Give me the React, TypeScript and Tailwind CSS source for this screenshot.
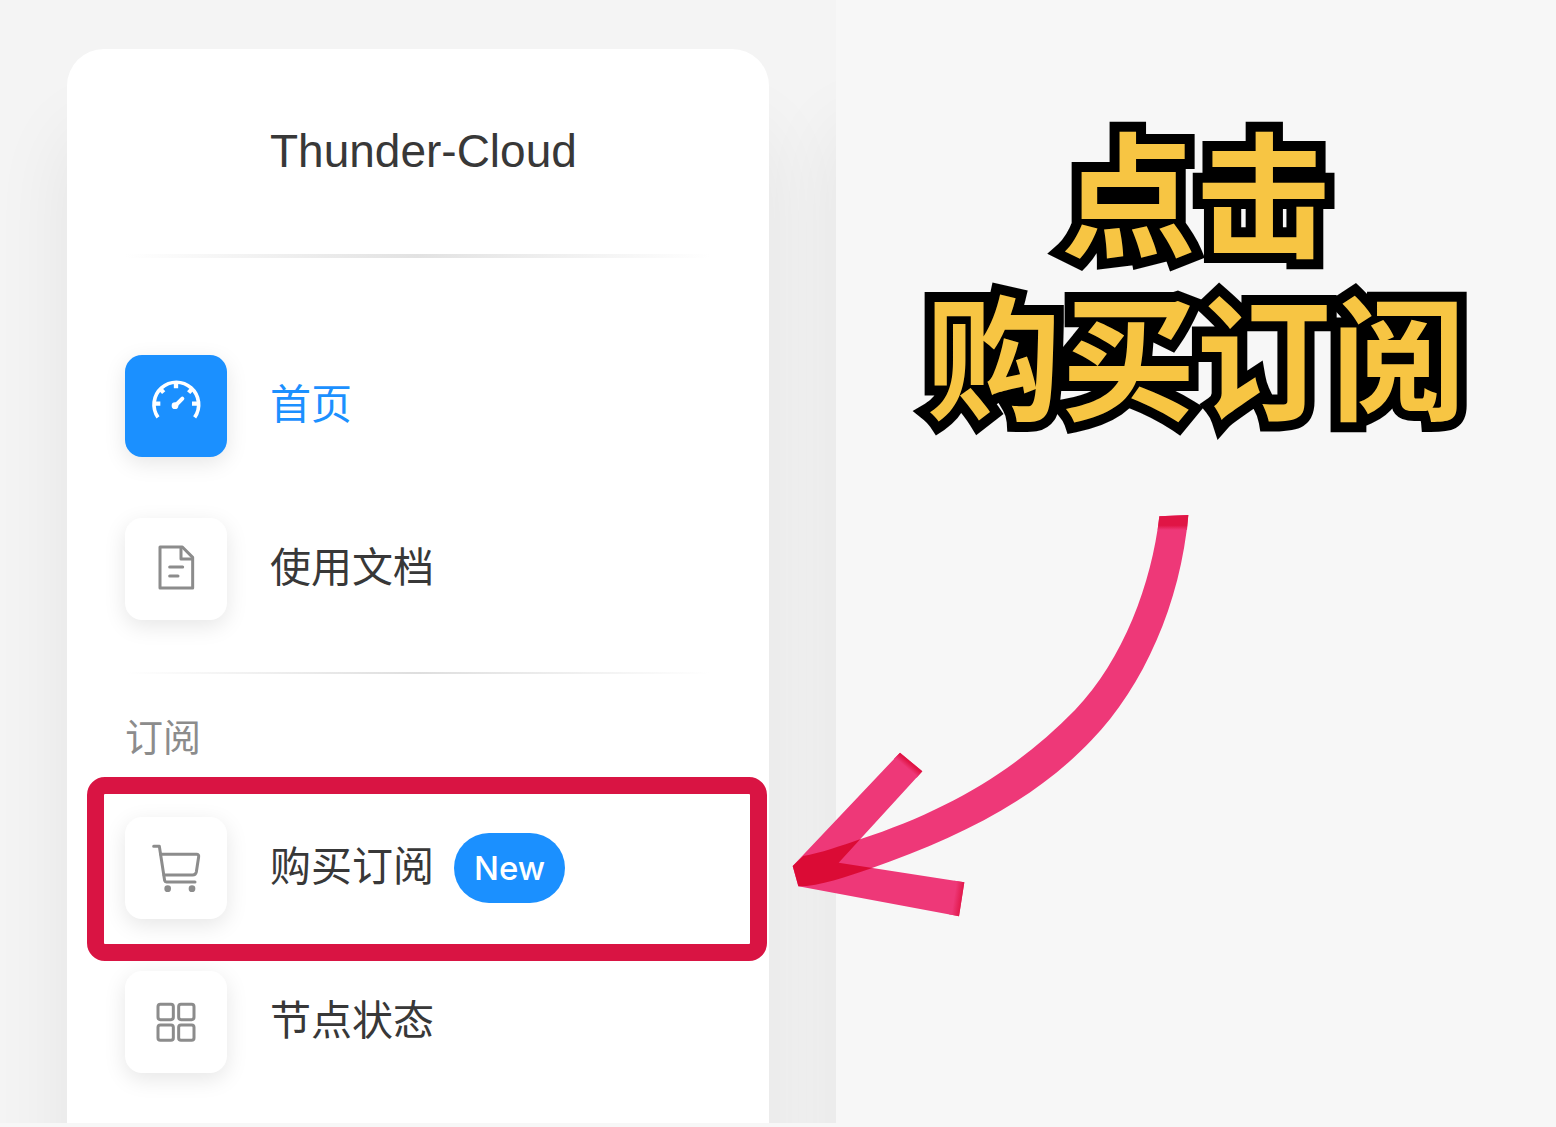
import type { ReactNode } from "react";

const ICON = "size-[92px] shrink-0";

function GaugeIcon() {
  return (
    <svg viewBox="0 0 276 276" className={ICON} fill="none" stroke="currentColor" strokeWidth="11" strokeLinecap="round" aria-hidden="true">
      <path d="M84 172A67 67 0 1 1 194 172" strokeLinecap="butt" />
      <path d="M138 68V85M92 88L101 98M185 88L176 98M74 131H91M186 131H203" strokeWidth="13" strokeLinecap="butt" />
      <path d="M138 135L157 116" strokeWidth="12" />
      <circle cx="135" cy="137" r="10" fill="currentColor" stroke="none" />
    </svg>
  );
}

function DocumentIcon() {
  return (
    <svg viewBox="0 9 276 276" className={ICON} fill="none" stroke="currentColor" strokeWidth="9" strokeLinejoin="round" strokeLinecap="round" aria-hidden="true">
      <path d="M90 81H157L188 112V204H90Z" />
      <path d="M153 83V117H187" />
      <path d="M119 141H158M119 168H144" />
    </svg>
  );
}

function CartIcon() {
  return (
    <svg viewBox="0 -9 276 276" className={ICON} fill="none" stroke="currentColor" strokeWidth="9" strokeLinejoin="round" strokeLinecap="round" aria-hidden="true">
      <path d="M71 64H88L104 167Q105 171 109 171H195" />
      <path d="M92 88H200Q207 88 206 95L199 141Q197 150 188 150H102" />
      <circle cx="113" cy="191" r="10" fill="currentColor" stroke="none" />
      <circle cx="186" cy="191" r="10" fill="currentColor" stroke="none" />
    </svg>
  );
}

function GridIcon() {
  return (
    <svg viewBox="0 3 276 276" className={ICON} fill="none" stroke="currentColor" strokeWidth="9" aria-hidden="true">
      <rect x="84" y="88" width="46" height="46" rx="7" />
      <rect x="146" y="88" width="46" height="46" rx="7" />
      <rect x="84" y="150" width="46" height="46" rx="7" />
      <rect x="146" y="150" width="46" height="46" rx="7" />
    </svg>
  );
}

function NavItem({ icon, label, active = false, badge }: { icon: ReactNode; label: string; active?: boolean; badge?: string }) {
  return (
    <a href="#" aria-current={active ? "page" : undefined} className="flex items-center">
      <span
        className={
          active
            ? "flex size-[102px] shrink-0 items-center justify-center rounded-[17px] bg-[#1b90ff] text-white shadow-[0_6px_22px_rgba(0,0,0,0.10)]"
            : "flex size-[102px] shrink-0 items-center justify-center rounded-[17px] bg-white text-[#8c8c8c] shadow-[0_6px_22px_rgba(0,0,0,0.10)]"
        }
      >
        {icon}
      </span>
      <span
        className={
          active
            ? "ml-[43px] pb-0.5 text-[41px] leading-[60px] whitespace-nowrap text-[#1b90ff]"
            : "ml-[43px] pb-0.5 text-[41px] leading-[60px] whitespace-nowrap text-[#383838]"
        }
      >
        {label}
      </span>
      {badge && (
        <span className="ml-5 flex h-[70px] items-center rounded-full bg-[#1b90ff] px-5 pt-0.5 font-[Inter] text-[33px] font-medium text-white">
          {badge}
        </span>
      )}
    </a>
  );
}

function Divider({ thick = false }: { thick?: boolean }) {
  return (
    <hr
      className={
        thick
          ? "h-1 border-0 bg-linear-to-r from-transparent via-[#e2e2e2] to-transparent"
          : "h-0.5 border-0 bg-linear-to-r from-transparent via-[#dedede] to-transparent"
      }
    />
  );
}

const SHAFT =
  "M1255 45C1232 310 1120 560 965 720C790 905 560 1015 300 1106C230 1130 150 1158 85 1159L68 1098L100 1068C150 1060 215 1037 270 1018C540 930 745 805 915 630C1060 480 1145 250 1168 49Z";
const HEAD = "M390 758L457 814L206 1088L583 1147L567 1249L85 1159L68 1098Z";

function Arrow() {
  return (
    <svg viewBox="66 45 1191 1206" className="relative -ml-11 h-[402px] w-[397px]" aria-hidden="true">
      <defs>
        <clipPath id="arrow-head">
          <path d={HEAD} />
        </clipPath>
        <linearGradient id="cap-top" gradientUnits="userSpaceOnUse" x1="0" y1="76" x2="0" y2="90">
          <stop stopColor="#e01545" />
          <stop offset="1" stopColor="#ee3878" />
        </linearGradient>
        <linearGradient id="cap-right" gradientUnits="userSpaceOnUse" x1="578" y1="1198" x2="552" y2="1194">
          <stop stopColor="#e01545" />
          <stop offset="1" stopColor="#ee3878" />
        </linearGradient>
        <linearGradient id="cap-left" gradientUnits="userSpaceOnUse" x1="421" y1="790" x2="410" y2="803">
          <stop stopColor="#e01545" />
          <stop offset="1" stopColor="#ee3878" />
        </linearGradient>
      </defs>
      <path d={HEAD} fill="#ee3878" />
      <path d={SHAFT} fill="#ee3878" />
      <path d={SHAFT} fill="#db0b35" clipPath="url(#arrow-head)" />
      <path d="M1168 49L1255 45L1251 90H1163Z" fill="url(#cap-top)" />
      <path d="M583 1147L567 1249L537 1243L553 1142Z" fill="url(#cap-right)" />
      <path d="M390 758L457 814L440 833L372 776Z" fill="url(#cap-left)" />
    </svg>
  );
}

export default function App() {
  return (
    <div className="grid min-h-screen grid-cols-[836fr_720fr] bg-[#f7f7f7] pb-1 font-['Liberation_Sans','Noto_Sans_CJK_SC',sans-serif]">
      <aside className="relative flex flex-col overflow-hidden bg-[#f4f4f4] px-[67px] pt-[49px]">
        <div className="absolute top-[49px] bottom-0 left-full w-40 shadow-[0_80px_80px_rgba(0,0,0,0.07)]" />
        <div className="relative flex-1 rounded-t-[37px] bg-white px-[58px] shadow-[0_80px_80px_rgba(0,0,0,0.07)]">
          <h1 className="flex h-[205px] items-center pl-[145px] text-[46px] whitespace-nowrap text-[#383838]">Thunder-Cloud</h1>
          <Divider thick />
          <nav className="pt-[97px] pb-[50px]">
            <ul className="flex flex-col gap-[61px] pb-[52px]">
              <li>
                <NavItem icon={<GaugeIcon />} label="首页" active />
              </li>
              <li>
                <NavItem icon={<DocumentIcon />} label="使用文档" />
              </li>
            </ul>
            <Divider />
            <h2 className="pt-9 text-[38px] leading-[56px] text-[#8c8c8c]">订阅</h2>
            <ul className="flex flex-col gap-[52px] pt-[51px]">
              <li className="relative">
                <div className="pointer-events-none absolute -top-10 -right-14 -bottom-[42px] -left-[38px] rounded-[18px] border-[17px] border-[#d91443]" />
                <NavItem icon={<CartIcon />} label="购买订阅" badge="New" />
              </li>
              <li>
                <NavItem icon={<GridIcon />} label="节点状态" />
              </li>
            </ul>
          </nav>
        </div>
      </aside>
      <main className="flex flex-col pt-[119px]">
        <p className="text-center text-[135px] leading-[163px] font-bold whitespace-nowrap text-[#f7c543] [-webkit-text-stroke:20px_#000] [paint-order:stroke_fill]">
          点击
          <br />
          购买订阅
        </p>
        <div className="pt-[70px]">
          <Arrow />
        </div>
      </main>
    </div>
  );
}
